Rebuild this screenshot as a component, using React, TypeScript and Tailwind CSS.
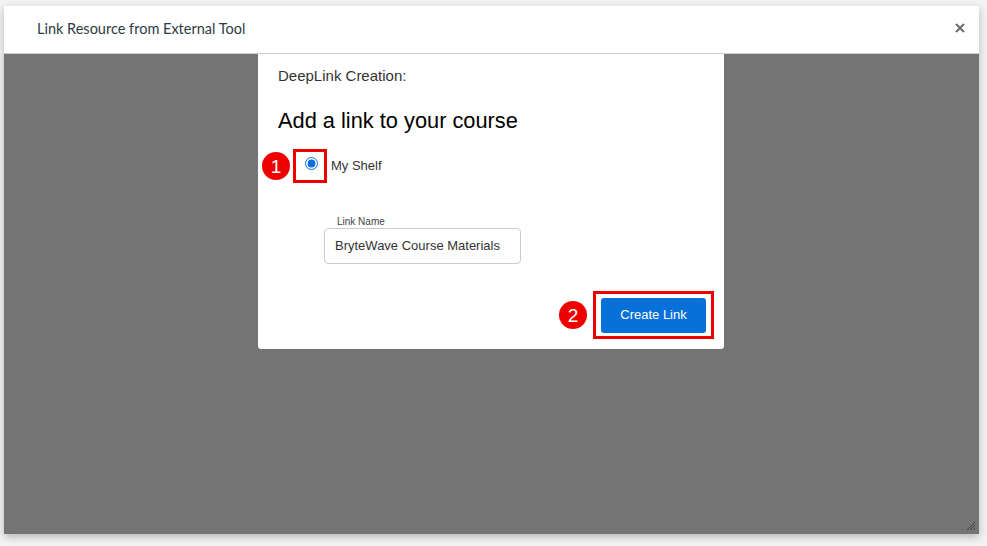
import React from "react";

function Badge({ n }: { n: string }) {
  return (
    <div className="w-[28px] h-[28px] rounded-full bg-[#ee0000] text-white flex items-center justify-center text-[19px] leading-none font-['Liberation_Sans',Arial,sans-serif]">
      {n}
    </div>
  );
}

export default function App() {
  return (
    <div className="w-[987px] h-[546px] bg-[#f3f3f3] pt-[6px] pl-[4px] overflow-hidden">
      <div className="w-[975px] h-[528px] flex flex-col shadow-[0_3px_8px_rgba(0,0,0,0.25)]">
        <div className="h-[48px] bg-white border-b border-[#c7cdd1] flex items-center justify-between pl-[33px] pr-[14px] shrink-0">
          <span className="font-['Lato',sans-serif] text-[14.5px] text-[#2d3b45] mt-[-2px]">Link Resource from External Tool</span>
          <svg width="10" height="10" viewBox="0 0 10 10" className="mt-[-3px]">
            <path d="M1 1 L9 9 M9 1 L1 9" stroke="#666" strokeWidth="1.8" />
          </svg>
        </div>
        <div className="flex-1 bg-[#747474] relative">
          <div className="ml-[254px] w-[466px] h-[295px] bg-white rounded-b-[3px] font-['Liberation_Sans',Arial,sans-serif] flex flex-col">
            <div className="pl-[20px] pt-[13px] text-[15px] leading-[17px] text-[#333]">DeepLink Creation:</div>
            <div className="pl-[20px] mt-[24px] text-[21.8px] leading-[26px] text-black">Add a link to your course</div>
            <div className="flex items-center mt-[15px] pl-[4px]">
              <Badge n="1" />
              <div className="ml-[3px] w-[34px] h-[34px] border-[3px] border-[#ee0000] flex items-center justify-center">
                <input type="radio" defaultChecked className="w-[13px] h-[13px] m-0 accent-[#0a6fe0] mb-[5px] ml-[2px]" />
              </div>
              <span className="ml-[4px] text-[13px] text-[#333]">My Shelf</span>
            </div>
            <div className="ml-[66px] mt-[33px] flex flex-col">
              <span className="ml-[13px] text-[10px] leading-[12px] text-[#444]">Link Name</span>
              <div className="w-[197px] h-[36px] border border-[#ccc] rounded-[4px] flex items-center px-[10px] text-[13px] text-[#333]">
                BryteWave Course Materials
              </div>
            </div>
            <div className="flex items-center justify-end mt-[27px] pr-[10px]">
              <Badge n="2" />
              <div className="ml-[6px] w-[121px] h-[48px] border-[3px] border-[#ee0000] flex items-center justify-center">
                <div className="w-[105px] h-[35px] bg-[#0770d9] rounded-[3px] text-white text-[13px] flex items-center justify-center">Create Link</div>
              </div>
            </div>
          </div>
          <svg className="absolute right-[3px] bottom-[3px]" width="10" height="10" viewBox="0 0 10 10">
            <path d="M9 1 L1 9 M9 4 L4 9 M9 7 L7 9" stroke="#444" strokeWidth="1" />
          </svg>
        </div>
      </div>
    </div>
  );
}
